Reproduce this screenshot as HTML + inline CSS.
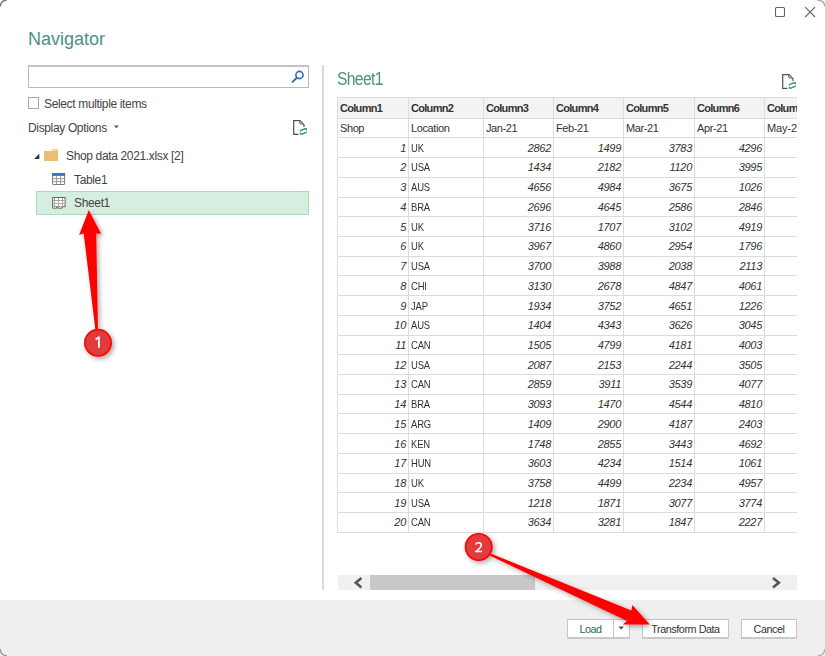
<!DOCTYPE html>
<html><head><meta charset="utf-8">
<style>
*{box-sizing:border-box;margin:0;padding:0}
html,body{width:825px;height:656px;overflow:hidden;background:#fff}
body{font-family:"Liberation Sans",sans-serif;color:#333;position:relative;font-size:12px}
.a{position:absolute;white-space:nowrap}
.title{left:28px;top:29px;font-size:18px;color:#4a9284}
.search{left:28px;top:65px;width:281px;height:23px;border:1px solid #b9b9b9;border-top:2px solid #c4c4c4;background:#fff}
.cb{left:28px;top:97px;width:11px;height:11.5px;border:1px solid #a6a6a6;background:#fff}
.txt{color:#444;font-size:12px;letter-spacing:-0.35px}
.sel{left:36px;top:191px;width:273px;height:24px;background:#d4eee0;border:1px solid #acdabd}
.vdiv{left:322px;top:65px;width:2px;height:525px;background:#dadada}
.h2{left:337px;top:68.5px;font-size:18px;color:#4a9284;letter-spacing:-0.8px;transform:scaleX(0.875);transform-origin:0 0}
.wrap{position:absolute;left:337px;top:97px;width:460px;height:440px;overflow:hidden}
table{position:absolute;left:0;top:0.2px;border-collapse:collapse;table-layout:fixed;width:497px}
td{border:1px solid #dcdcdc;height:19.72px;padding:0 3px 0 2px;font-size:11px;color:#333;overflow:hidden;white-space:nowrap;letter-spacing:-0.4px}
tr.hd td{background:#f3f3f3;font-weight:bold;height:20.5px;letter-spacing:-0.7px}
td.n{text-align:right;font-style:italic;letter-spacing:-0.3px;padding-right:2px}
.c{display:inline-block;transform:scaleX(0.86);transform-origin:0 50%;letter-spacing:-0.2px}
.track{left:338px;top:575px;width:459px;height:15px;background:#f0f0f0}
.thumb{left:370px;top:575px;width:165px;height:15px;background:#c8c8c8}
.footer{left:0;top:600px;width:825px;height:56px;background:#efefef}
.btn{border:1px solid #c6c6c6;border-bottom:2px solid #c9c9c9;background:#fff;height:20px;top:619px;font-size:10.8px;letter-spacing:-0.45px;color:#333;text-align:center;line-height:18px}
svg{position:absolute;left:0;top:0}
</style></head><body>
<div class="a title">Navigator</div>
<div class="a search"></div>
<div class="a cb"></div>
<div class="a txt" style="left:44px;top:96.7px">Select multiple items</div>
<div class="a txt" style="left:28px;top:121px">Display Options</div>
<div class="a txt" style="left:66px;top:149px">Shop data 2021.xlsx [2]</div>
<div class="a txt" style="left:74px;top:173px">Table1</div>
<div class="a sel"></div>
<div class="a txt" style="left:74px;top:196px">Sheet1</div>
<div class="a vdiv"></div>
<div class="a h2">Sheet1</div>
<div class="wrap"><table id="tb">
<colgroup><col style="width:71px"><col style="width:75px"><col style="width:70px"><col style="width:70px"><col style="width:71px"><col style="width:70px"><col style="width:70px"></colgroup>
<tr class="hd"><td>Column1</td><td>Column2</td><td>Column3</td><td>Column4</td><td>Column5</td><td>Column6</td><td>Column7</td></tr>
<tr><td>Shop</td><td>Location</td><td>Jan-21</td><td>Feb-21</td><td>Mar-21</td><td>Apr-21</td><td style="letter-spacing:-0.1px">May-2</td></tr>
<tr><td class="n">1</td><td><span class="c">UK</span></td><td class="n">2862</td><td class="n">1499</td><td class="n">3783</td><td class="n">4296</td><td class="n"></td></tr>
<tr><td class="n">2</td><td><span class="c">USA</span></td><td class="n">1434</td><td class="n">2182</td><td class="n">1120</td><td class="n">3995</td><td class="n"></td></tr>
<tr><td class="n">3</td><td><span class="c">AUS</span></td><td class="n">4656</td><td class="n">4984</td><td class="n">3675</td><td class="n">1026</td><td class="n"></td></tr>
<tr><td class="n">4</td><td><span class="c">BRA</span></td><td class="n">2696</td><td class="n">4645</td><td class="n">2586</td><td class="n">2846</td><td class="n"></td></tr>
<tr><td class="n">5</td><td><span class="c">UK</span></td><td class="n">3716</td><td class="n">1707</td><td class="n">3102</td><td class="n">4919</td><td class="n"></td></tr>
<tr><td class="n">6</td><td><span class="c">UK</span></td><td class="n">3967</td><td class="n">4860</td><td class="n">2954</td><td class="n">1796</td><td class="n"></td></tr>
<tr><td class="n">7</td><td><span class="c">USA</span></td><td class="n">3700</td><td class="n">3988</td><td class="n">2038</td><td class="n">2113</td><td class="n"></td></tr>
<tr><td class="n">8</td><td><span class="c">CHI</span></td><td class="n">3130</td><td class="n">2678</td><td class="n">4847</td><td class="n">4061</td><td class="n"></td></tr>
<tr><td class="n">9</td><td><span class="c">JAP</span></td><td class="n">1934</td><td class="n">3752</td><td class="n">4651</td><td class="n">1226</td><td class="n"></td></tr>
<tr><td class="n">10</td><td><span class="c">AUS</span></td><td class="n">1404</td><td class="n">4343</td><td class="n">3626</td><td class="n">3045</td><td class="n"></td></tr>
<tr><td class="n">11</td><td><span class="c">CAN</span></td><td class="n">1505</td><td class="n">4799</td><td class="n">4181</td><td class="n">4003</td><td class="n"></td></tr>
<tr><td class="n">12</td><td><span class="c">USA</span></td><td class="n">2087</td><td class="n">2153</td><td class="n">2244</td><td class="n">3505</td><td class="n"></td></tr>
<tr><td class="n">13</td><td><span class="c">CAN</span></td><td class="n">2859</td><td class="n">3911</td><td class="n">3539</td><td class="n">4077</td><td class="n"></td></tr>
<tr><td class="n">14</td><td><span class="c">BRA</span></td><td class="n">3093</td><td class="n">1470</td><td class="n">4544</td><td class="n">4810</td><td class="n"></td></tr>
<tr><td class="n">15</td><td><span class="c">ARG</span></td><td class="n">1409</td><td class="n">2900</td><td class="n">4187</td><td class="n">2403</td><td class="n"></td></tr>
<tr><td class="n">16</td><td><span class="c">KEN</span></td><td class="n">1748</td><td class="n">2855</td><td class="n">3443</td><td class="n">4692</td><td class="n"></td></tr>
<tr><td class="n">17</td><td><span class="c">HUN</span></td><td class="n">3603</td><td class="n">4234</td><td class="n">1514</td><td class="n">1061</td><td class="n"></td></tr>
<tr><td class="n">18</td><td><span class="c">UK</span></td><td class="n">3758</td><td class="n">4499</td><td class="n">2234</td><td class="n">4957</td><td class="n"></td></tr>
<tr><td class="n">19</td><td><span class="c">USA</span></td><td class="n">1218</td><td class="n">1871</td><td class="n">3077</td><td class="n">3774</td><td class="n"></td></tr>
<tr><td class="n">20</td><td><span class="c">CAN</span></td><td class="n">3634</td><td class="n">3281</td><td class="n">1847</td><td class="n">2227</td><td class="n"></td></tr>
</table></div>
<div class="a track"></div>
<div class="a thumb"></div>
<div class="a footer"></div>
<div class="a btn" style="left:567px;width:47px;color:#1f6b4e">Load</div>
<div class="a btn" style="left:613px;width:17px"></div>
<div class="a btn" style="left:642px;width:87px">Transform Data</div>
<div class="a btn" style="left:741px;width:56px">Cancel</div>
<svg width="825" height="656" viewBox="0 0 825 656">
<defs>
<filter id="sh" x="-50%" y="-50%" width="200%" height="200%"><feGaussianBlur in="SourceAlpha" stdDeviation="2.5"/><feOffset dx="2" dy="2"/><feComponentTransfer><feFuncA type="linear" slope="0.35"/></feComponentTransfer><feMerge><feMergeNode/><feMergeNode in="SourceGraphic"/></feMerge></filter>
</defs>
<!-- window controls -->
<rect x="775.5" y="7.5" width="9" height="9" rx="1" fill="none" stroke="#666" stroke-width="1.1"/>
<path d="M805.2,7.2 L815,17 M815,7.2 L805.2,17" stroke="#666" stroke-width="1.1" fill="none"/>
<path d="M817.5,0.3 Q824.7,0.3 824.7,6.5" stroke="#aaa" stroke-width="1.2" fill="none"/>
<path d="M0.4,6.5 Q0.4,0.6 6.5,0.3" stroke="#777" stroke-width="1.3" fill="none"/>
<path d="M0.3,649 Q0.6,655.5 7,655.7" stroke="#999" stroke-width="1.3" fill="none"/>
<path d="M824.7,649 Q824.4,655.5 818,655.7" stroke="#aaa" stroke-width="1.2" fill="none"/>
<!-- search icon -->
<circle cx="299.5" cy="75" r="3.6" fill="none" stroke="#2f6db5" stroke-width="1.6"/>
<path d="M296.8,77.7 L292.6,81.9" stroke="#2f6db5" stroke-width="2" stroke-linecap="round"/>
<!-- dropdown arrow display options -->
<path d="M113.9,125.4 L118.9,125.4 L116.4,128.2 Z" fill="#555"/>
<!-- refresh icons -->
<g id="rf" transform="translate(293,120)">
<path d="M5.4,14.4 H0.7 V0.7 H7 L11,4.7 V7" fill="none" stroke="#505050" stroke-width="1.2"/>
<path d="M6.6,1.4 Q6.2,4.4 9.6,4.2" fill="none" stroke="#666" stroke-width="1.1"/>
<path d="M6.8,10.9 L11.8,8.9" fill="none" stroke="#379169" stroke-width="1.4"/>
<polygon points="10.6,7.9 13.8,7.9 13.8,11" fill="#379169"/>
<path d="M13.8,12.1 L8.8,14.1" fill="none" stroke="#379169" stroke-width="1.4"/>
<polygon points="6.8,11.9 6.8,14.8 10,14.8" fill="#379169"/>
</g>
<use href="#rf" transform="translate(489,-46)"/>
<!-- tree triangle -->
<path d="M39.3,153.8 V158.9 H34.1 Z" fill="#333"/>
<!-- folder -->
<path d="M44,151 H51.5 L52.5,149 H58 V161 H44 Z" fill="#e9bf78"/>
<path d="M52.8,150 H57" stroke="#fbeed5" stroke-width="1"/>
<!-- table1 icon -->
<rect x="52.6" y="173.5" width="12" height="11" rx="0.6" fill="#fff" stroke="#777" stroke-width="1"/>
<rect x="52.1" y="173" width="13" height="2.9" fill="#3b73bf"/>
<path d="M52.6,178.7 H64.6 M52.6,181.6 H64.6 M56.6,175.8 V184.5 M60.6,175.8 V184.5" stroke="#9a9a9a" stroke-width="1"/>
<!-- sheet1 icon -->
<rect x="52.6" y="197.5" width="12.5" height="9.2" fill="#fff" stroke="#666" stroke-width="1"/>
<path d="M54.5,198 V206.5 M58.5,198 V206.5 M62.6,198 V206.5 M53,200.5 H64.6 M53,203.6 H64.6" stroke="#a8a8a8" stroke-width="1"/>
<path d="M52.6,206.7 V208.2 H56.8 V206.8 M57.9,206.8 V208.2 H62.2 V206.8" fill="#fff" stroke="#666" stroke-width="1"/>
<!-- scroll arrows -->
<path d="M361.4,578 L355.8,582.7 L361.4,587.4" fill="none" stroke="#555" stroke-width="2.6"/>
<path d="M773,578 L778.8,582.7 L773,587.4" fill="none" stroke="#555" stroke-width="2.6"/>
<!-- load dropdown arrow -->
<path d="M618.4,626.6 L624,626.6 L621.2,629.8 Z" fill="#555"/>
<!-- annotations -->
<g filter="url(#sh)">
<polygon points="95.3,329.0 98.0,329.0 96.2,233.5 101.1,233.8 88.8,210.0 79.2,234.7 83.7,233.5" fill="#ff0000"/>
<polygon points="490.6,553.6 490.1,555.7 627.0,621.0 622.7,624.4 649.8,624.4 632.4,605.0 631.4,610.4" fill="#ff0000"/>
<circle cx="98" cy="342.8" r="13.2" fill="#e23a3c" stroke="#ff0000" stroke-width="1.6"/>
<circle cx="478.7" cy="547" r="13.2" fill="#e23a3c" stroke="#ff0000" stroke-width="1.6"/>
</g>
<path d="M98.9,347.8 V337.2 L95.6,339.6" fill="none" stroke="#fff" stroke-width="1.8" stroke-linejoin="round"/>
<path d="M475.6,544.6 Q476.3,542.7 478.6,542.7 Q481.3,542.7 481.3,545.2 Q481.3,547 478.8,549.1 L475.7,551.5 H482.2" fill="none" stroke="#fff" stroke-width="1.5" stroke-linejoin="round"/>
</svg>
</body></html>
